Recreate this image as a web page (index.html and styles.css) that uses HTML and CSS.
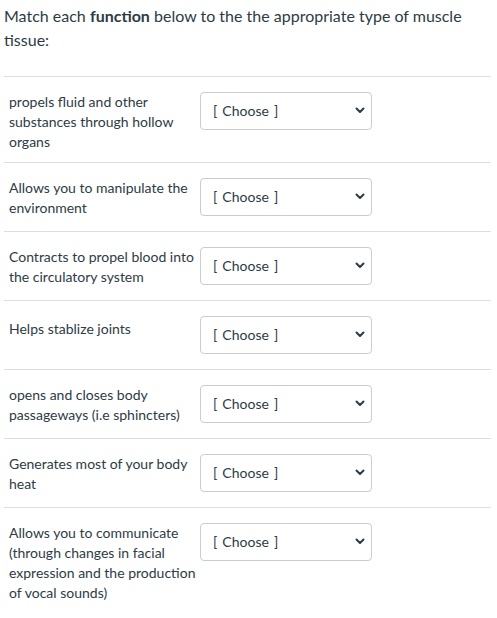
FILE: index.html
```html
<!DOCTYPE html>
<html>
<head>
<meta charset="utf-8">
<link rel="stylesheet" href="styles.css">
</head>
<body>
<div class="question">
  <div class="prompt">Match each <strong>function</strong> below to the the appropriate type of muscle tissue:</div>
  <div class="answers">
    <div class="row">
      <div class="label">propels fluid and other substances through hollow organs</div>
      <div class="pick"><select><option>[ Choose ]</option></select><svg class="chev" width="10" height="7" viewBox="0 0 10 7"><path d="M1.5 1.5 L5 5 L8.5 1.5" fill="none" stroke="#2d3b45" stroke-width="2" stroke-linecap="round" stroke-linejoin="round"/></svg></div>
    </div>
    <div class="row">
      <div class="label">Allows you to manipulate the environment</div>
      <div class="pick"><select><option>[ Choose ]</option></select><svg class="chev" width="10" height="7" viewBox="0 0 10 7"><path d="M1.5 1.5 L5 5 L8.5 1.5" fill="none" stroke="#2d3b45" stroke-width="2" stroke-linecap="round" stroke-linejoin="round"/></svg></div>
    </div>
    <div class="row">
      <div class="label">Contracts to propel blood into the circulatory system</div>
      <div class="pick"><select><option>[ Choose ]</option></select><svg class="chev" width="10" height="7" viewBox="0 0 10 7"><path d="M1.5 1.5 L5 5 L8.5 1.5" fill="none" stroke="#2d3b45" stroke-width="2" stroke-linecap="round" stroke-linejoin="round"/></svg></div>
    </div>
    <div class="row">
      <div class="label single">Helps stablize joints</div>
      <div class="pick"><select><option>[ Choose ]</option></select><svg class="chev" width="10" height="7" viewBox="0 0 10 7"><path d="M1.5 1.5 L5 5 L8.5 1.5" fill="none" stroke="#2d3b45" stroke-width="2" stroke-linecap="round" stroke-linejoin="round"/></svg></div>
    </div>
    <div class="row">
      <div class="label">opens and closes body passageways (i.e sphincters)</div>
      <div class="pick"><select><option>[ Choose ]</option></select><svg class="chev" width="10" height="7" viewBox="0 0 10 7"><path d="M1.5 1.5 L5 5 L8.5 1.5" fill="none" stroke="#2d3b45" stroke-width="2" stroke-linecap="round" stroke-linejoin="round"/></svg></div>
    </div>
    <div class="row">
      <div class="label">Generates most of your body heat</div>
      <div class="pick"><select><option>[ Choose ]</option></select><svg class="chev" width="10" height="7" viewBox="0 0 10 7"><path d="M1.5 1.5 L5 5 L8.5 1.5" fill="none" stroke="#2d3b45" stroke-width="2" stroke-linecap="round" stroke-linejoin="round"/></svg></div>
    </div>
    <div class="row">
      <div class="label">Allows you to communicate (through changes in facial expression and the production of vocal sounds)</div>
      <div class="pick"><select><option>[ Choose ]</option></select><svg class="chev" width="10" height="7" viewBox="0 0 10 7"><path d="M1.5 1.5 L5 5 L8.5 1.5" fill="none" stroke="#2d3b45" stroke-width="2" stroke-linecap="round" stroke-linejoin="round"/></svg></div>
    </div>
  </div>
</div>
</body>
</html>
```
FILE: styles.css
```css
html, body {
  margin: 0;
  padding: 0;
  background: #fff;
}
body {
  font-family: Lato, "Open Sans", sans-serif;
  color: #2d3b45;
}
.question {
  padding: 4px 6px 0 4px;
}
.prompt {
  font-size: 16px;
  line-height: 24px;
  margin-bottom: 24px;
}
.prompt strong {
  font-weight: 700;
}
.row {
  display: flex;
  align-items: flex-start;
  border-top: 1px solid #dcdfe1;
  padding: 15px 0 10px 5px;
}
.label {
  width: 187px;
  flex: none;
  font-size: 14px;
  line-height: 20px;
  padding-right: 4px;
}
.label.single {
  padding-top: 3px;
}
.pick {
  position: relative;
  width: 172px;
  height: 38px;
  margin-bottom: 5px;
}
.pick select {
  appearance: none;
  -webkit-appearance: none;
  width: 100%;
  height: 100%;
  box-sizing: border-box;
  border: 1px solid #c7cdd1;
  border-radius: 4px;
  background: #fff;
  font-family: Lato, "Open Sans", sans-serif;
  font-size: 14px;
  word-spacing: 1.5px;
  color: #2d3b45;
  padding: 0 0 2px 12px;
  margin: 0;
}
.chev {
  position: absolute;
  right: 7px;
  top: 15px;
  pointer-events: none;
}
```
